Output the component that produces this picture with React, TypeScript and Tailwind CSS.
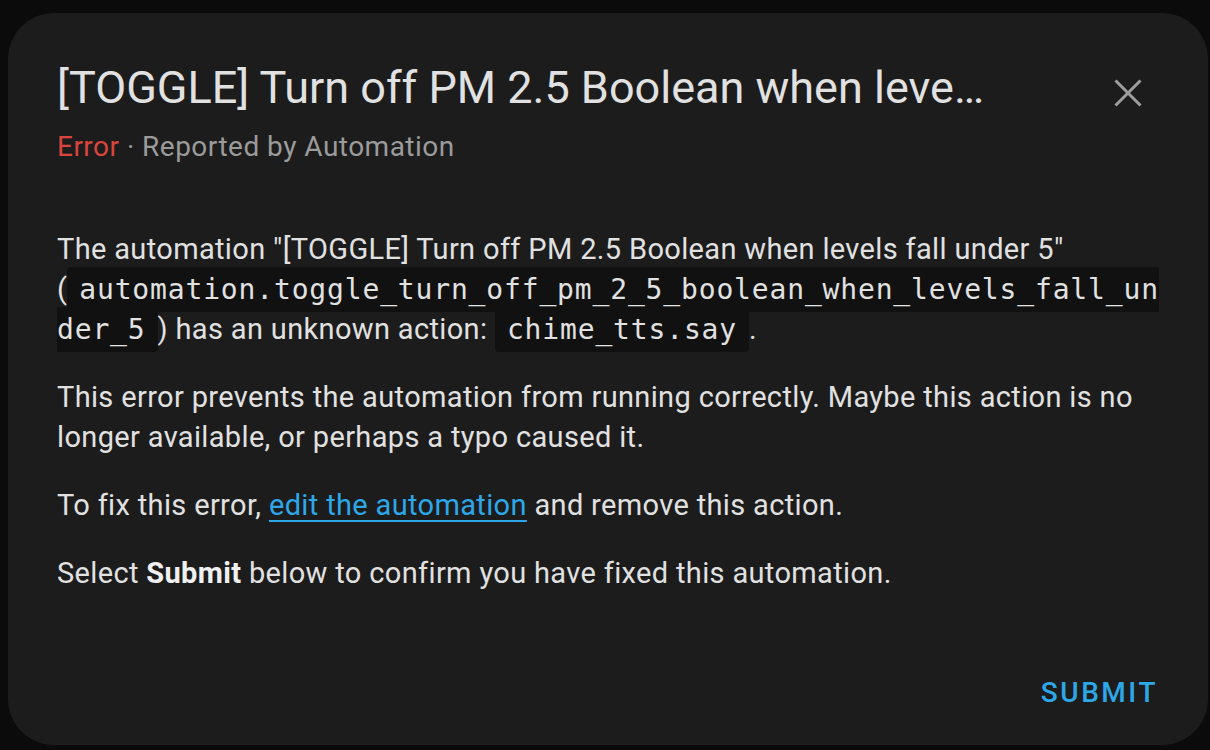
export default function App() {
  return (
    <div className="h-[750px] w-[1210px] overflow-hidden bg-[#0b0b0c] pt-[13px] pl-[8px] font-['Roboto',sans-serif]">
      <div className="flex h-[732px] w-[1200px] flex-col rounded-[46px] bg-[#1c1c1c]">
        <div className="flex items-start pl-[49px] pr-[66px] pt-[47px]">
          <div className="min-w-0 flex-1">
            <h2 className="max-w-[930px] truncate text-[45px] leading-[56px] text-[#e1e1e1]">
              [TOGGLE] Turn off PM 2.5 Boolean when levels fall under 5
            </h2>
            <p className="mt-[15px] text-[28px] leading-[32px] text-[#9b9b9b] tracking-[0.017em]">
              <span className="text-[#d9453d]">Error</span> · Reported by Automation
            </p>
          </div>
          <button className="mt-[19px] flex h-[28px] w-[28px] items-center justify-center">
            <svg width="28" height="28" viewBox="0 0 28 28">
              <path d="M1.5 1.5 L26.5 26.5 M26.5 1.5 L1.5 26.5" stroke="#9e9e9e" strokeWidth="3" />
            </svg>
          </button>
        </div>

        <div className="mt-[66px] pl-[49px] pr-[48px] text-[29px] leading-[40px] tracking-[0.012em] text-[#e1e1e1] break-words">
          <p>
            The automation "[TOGGLE] Turn off PM 2.5 Boolean when levels fall under 5" (
            <code className="rounded-[4px] bg-[#111111] px-[12px] py-[6px] font-['DejaVu_Sans_Mono',monospace] text-[28px] leading-none tracking-[0.03em] [overflow-wrap:anywhere]">
              automation.toggle_turn_off_pm_2_5_boolean_when_levels_fall_under_5
            </code>
            ) has an unknown action:{" "}
            <code className="rounded-[4px] bg-[#111111] px-[12px] py-[6px] font-['DejaVu_Sans_Mono',monospace] text-[28px] leading-none tracking-[0.03em]">
              chime_tts.say
            </code>
            .
          </p>
          <p className="mt-[28px]">
            This error prevents the automation from running correctly. Maybe this action is no longer
            available, or perhaps a typo caused it.
          </p>
          <p className="mt-[28px]">
            To fix this error,{" "}
            <a className="text-[#2ea7e8] underline underline-offset-[5px]" href="#">
              edit the automation
            </a>{" "}
            and remove this action.
          </p>
          <p className="mt-[28px]">
            Select <b className="font-bold text-[#f0f0f0]">Submit</b> below to confirm you have fixed this
            automation.
          </p>
        </div>

        <div className="mt-auto flex justify-end pb-[36px] pr-[50px]">
          <button className="text-[28px] font-medium leading-[32px] tracking-[0.09em] text-[#2ea7e8]">
            SUBMIT
          </button>
        </div>
      </div>
    </div>
  );
}
